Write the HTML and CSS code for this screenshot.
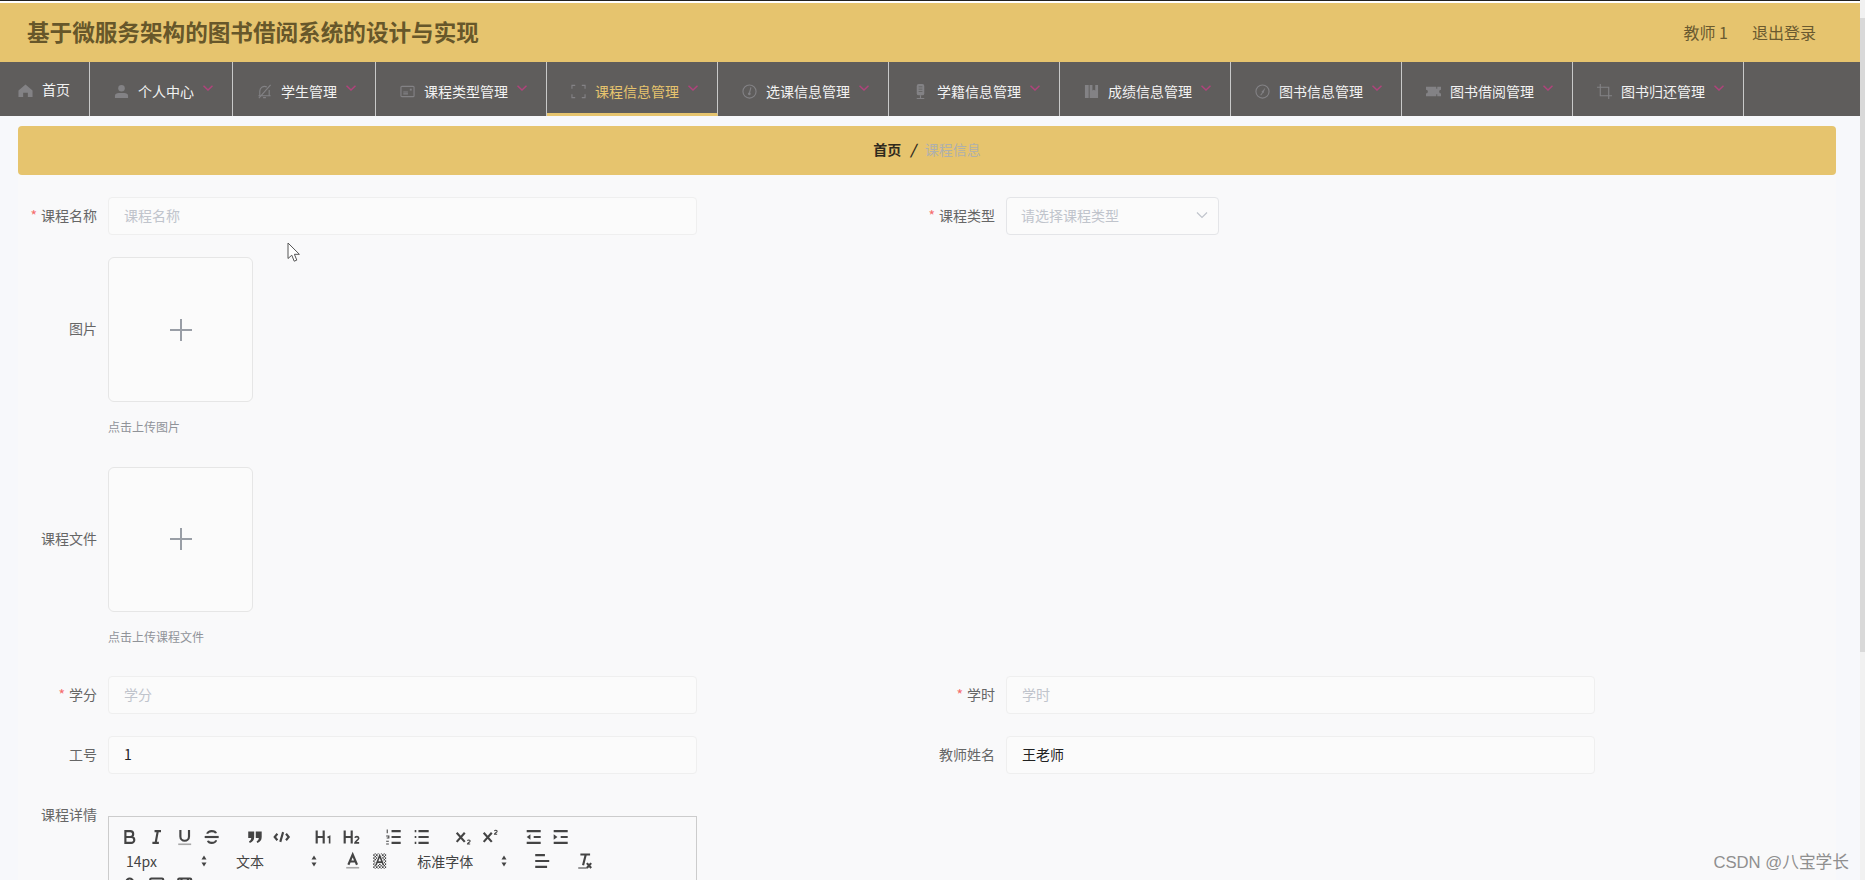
FILE: index.html
```html
<!DOCTYPE html>
<html lang="zh">
<head>
    <meta charset="UTF-8">
    <meta name="viewport" content="width=device-width, initial-scale=1.0">
    <title>基于微服务架构的图书借阅系统的设计与实现</title>
    <link rel="stylesheet" href="styles.css">
</head>
<body>
    <div class="page">
        <header class="topbar">
            <h1 class="title">基于微服务架构的图书借阅系统的设计与实现</h1>
            <div class="user">
                <span>教师 1</span>
                <a href="#logout">退出登录</a>
            </div>
        </header>

        <nav class="menu">
            <a class="menu-item menu-home" href="#home">
                <svg class="menu-icon" viewBox="0 0 16 16"><path class="fill" d="M8 1.500 15.500 8v7H10.500v-4.500h-5V15H.5V8z"/></svg>
                <span>首页</span>
            </a>
            <a class="menu-item" href="#user">
                <svg class="menu-icon" viewBox="0 0 16 16"><circle class="fill" cx="8" cy="4.500" r="3.500"/><path class="fill" d="M1 15v-2.500C1 10.500 3 9.500 5 9.500h6c2 0 4 1 4 3V15z"/></svg>
                <span>个人中心</span>
                <svg class="chev" viewBox="0 0 10 6"><path d="M.5.8 5 5 9.500.8"/></svg>
            </a>
            <a class="menu-item" href="#students">
                <svg class="menu-icon" viewBox="0 0 16 16"><path class="line" d="M3 12.500V7.500a5 5 0 0 1 7.500-4.300M13 6.500v6H5M1.500 12.500H14.500M14.500 1 2 15M6.500 14.500h3"/></svg>
                <span>学生管理</span>
                <svg class="chev" viewBox="0 0 10 6"><path d="M.5.8 5 5 9.500.8"/></svg>
            </a>
            <a class="menu-item" href="#types">
                <svg class="menu-icon" viewBox="0 0 16 16"><rect class="line" x="1" y="2.500" width="14" height="11" rx="1"/><path class="line" d="M3.500 8.500h5M3.500 10.500h5"/><rect class="fill" x="10.500" y="5" width="2" height="2"/></svg>
                <span>课程类型管理</span>
                <svg class="chev" viewBox="0 0 10 6"><path d="M.5.8 5 5 9.500.8"/></svg>
            </a>
            <a class="menu-item active" href="#courses">
                <svg class="menu-icon" viewBox="0 0 16 16"><path class="line" d="M1 5V1.500h3.500M11.500 1.500H15V5M15 11v3.500h-3.500M4.500 14.500H1V11"/></svg>
                <span>课程信息管理</span>
                <svg class="chev" viewBox="0 0 10 6"><path d="M.5.8 5 5 9.500.8"/></svg>
            </a>
            <a class="menu-item" href="#selection">
                <svg class="menu-icon" viewBox="0 0 16 16"><circle class="line" cx="8" cy="8" r="7"/><path class="line" d="M9.500 3.500 8 9.500"/><circle class="fill" cx="7.800" cy="10.500" r="1.500"/></svg>
                <span>选课信息管理</span>
                <svg class="chev" viewBox="0 0 10 6"><path d="M.5.8 5 5 9.500.8"/></svg>
            </a>
            <a class="menu-item" href="#records">
                <svg class="menu-icon" viewBox="0 0 16 16"><rect class="fill" x="4" y="0" width="8" height="12" rx="2"/><path class="line" d="M8 12v3.500M4 15.500h8"/><path class="gap" d="M6 3h4M6 5.500h4M6 8h4"/></svg>
                <span>学籍信息管理</span>
                <svg class="chev" viewBox="0 0 10 6"><path d="M.5.8 5 5 9.500.8"/></svg>
            </a>
            <a class="menu-item" href="#grades">
                <svg class="menu-icon" viewBox="0 0 16 16"><path class="fill" d="M1 1h4v14H1zM6 1h3v6l1.500-1L12 7V1h3v14H6z"/></svg>
                <span>成绩信息管理</span>
                <svg class="chev" viewBox="0 0 10 6"><path d="M.5.8 5 5 9.500.8"/></svg>
            </a>
            <a class="menu-item" href="#books">
                <svg class="menu-icon" viewBox="0 0 16 16"><circle class="line" cx="8" cy="8" r="7"/><path class="fill" d="M11 4 9 9.500 6.800 8.500z"/><path class="line" d="M9 8 6 12"/></svg>
                <span>图书信息管理</span>
                <svg class="chev" viewBox="0 0 10 6"><path d="M.5.8 5 5 9.500.8"/></svg>
            </a>
            <a class="menu-item" href="#borrow">
                <svg class="menu-icon" viewBox="0 0 16 16"><path class="fill" d="M0 3h11v2h1V3h4v3a2 2 0 0 0 0 4v3h-4v-2h-1v2H0v-3a2 2 0 0 0 0-4z"/></svg>
                <span>图书借阅管理</span>
                <svg class="chev" viewBox="0 0 10 6"><path d="M.5.8 5 5 9.500.8"/></svg>
            </a>
            <a class="menu-item" href="#return">
                <svg class="menu-icon" viewBox="0 0 16 16"><path class="line" d="M3.500 0v12.500H16M0 3.500h12.500V16"/></svg>
                <span>图书归还管理</span>
                <svg class="chev" viewBox="0 0 10 6"><path d="M.5.8 5 5 9.500.8"/></svg>
            </a>
        </nav>

        <main class="content">
            <div class="crumbs">
                <b>首页</b>
                <i>/</i>
                <span>课程信息</span>
            </div>

            <form class="course-form">
                <div class="row">
                    <label class="field-label"><em>*</em>课程名称</label>
                    <input class="input" type="text" placeholder="课程名称">
                </div>
                <div class="row">
                    <label class="field-label"><em>*</em>课程类型</label>
                    <div class="input select">
                        <span>请选择课程类型</span>
                        <svg class="select-arrow" viewBox="0 0 12 8"><path d="M1 1.500 6 6.500 11 1.500"/></svg>
                    </div>
                </div>

                <div class="row wide">
                    <label class="field-label upload-label">图片</label>
                    <div>
                        <div class="upload">
                            <svg class="plus" viewBox="0 0 22 22"><path d="M11 0v22M0 11h22"/></svg>
                        </div>
                        <p class="hint">点击上传图片</p>
                    </div>
                </div>
                <div class="row wide">
                    <label class="field-label upload-label">课程文件</label>
                    <div>
                        <div class="upload">
                            <svg class="plus" viewBox="0 0 22 22"><path d="M11 0v22M0 11h22"/></svg>
                        </div>
                        <p class="hint">点击上传课程文件</p>
                    </div>
                </div>

                <div class="row">
                    <label class="field-label"><em>*</em>学分</label>
                    <input class="input" type="text" placeholder="学分">
                </div>
                <div class="row">
                    <label class="field-label"><em>*</em>学时</label>
                    <input class="input" type="text" placeholder="学时">
                </div>
                <div class="row">
                    <label class="field-label">工号</label>
                    <input class="input" type="text" value="1">
                </div>
                <div class="row">
                    <label class="field-label">教师姓名</label>
                    <input class="input" type="text" value="王老师">
                </div>

                <div class="row wide">
                    <label class="field-label">课程详情</label>
                    <div class="editor">
                        <div class="tool-group">
                            <svg class="tool" viewBox="0 0 18 18"><path class="st" d="M5 3.500h4.500a2.700 2.700 0 0 1 0 5.500H5zM5 9h5.500a2.700 2.700 0 0 1 0 5.500H5z"/></svg>
                            <svg class="tool" viewBox="0 0 18 18"><path class="st" d="M7 3.500h6M5 14.500h6M8 14.500l2-11"/></svg>
                            <svg class="tool" viewBox="0 0 18 18"><path class="st" d="M5 2.500v6a4 4 0 0 0 8 0v-6"/><rect class="shade" x="3" y="15" width="12" height="1.500"/></svg>
                            <svg class="tool" viewBox="0 0 18 18"><path class="st" d="M13 5.500C12.500 4 11 3.500 9 3.500S5 4.500 5 6M5.500 12.500c.5 1.500 1.500 2 3.500 2s4-1 4-2.500"/><path class="st" d="M2.500 9h13"/></svg>
                        </div>
                        <div class="tool-group">
                            <svg class="tool" viewBox="0 0 18 18"><path class="fl" d="M3 4h5.500v5c0 3-1.500 4.500-4 5.500l-.8-1.300C5 12.500 5.800 11.500 5.800 10H3zM10 4h5.500v5c0 3-1.500 4.500-4 5.500l-.8-1.300c1.300-.7 2.100-1.700 2.100-3.200H10z"/></svg>
                            <svg class="tool" viewBox="0 0 18 18"><path class="st" d="M5 6 2.500 9 5 12M13 6l2.500 3L13 12M10.300 4.500 7.700 13.500"/></svg>
                        </div>
                        <div class="tool-group">
                            <svg class="tool" viewBox="0 0 18 18"><path class="st" d="M2.500 3v12M9 3v12M2.500 9H9"/><path class="mid" d="M12.500 9.500l2-1V15"/></svg>
                            <svg class="tool" viewBox="0 0 18 18"><path class="st" d="M2.500 3v12M9 3v12M2.500 9H9"/><path class="mid" d="M12 9.800c.5-1.600 3.500-1.600 3.500.3 0 1.500-3.500 2.900-3.500 4.400h3.900"/></svg>
                        </div>
                        <div class="tool-group">
                            <svg class="tool" viewBox="0 0 18 18"><path class="st" d="M7 3.500h8.500M7 9h8.500M7 14.500h8.500"/><path class="th" d="M3 2v3.500M2 8h2.500v2H2.500M2 13h2.500M2 15.500h2.500"/></svg>
                            <svg class="tool" viewBox="0 0 18 18"><path class="st" d="M6 3.500h9.500M6 9h9.500M6 14.500h9.500M2.500 3.500h1.500M2.500 9h1.500M2.500 14.500h1.500"/></svg>
                        </div>
                        <div class="tool-group">
                            <svg class="tool" viewBox="0 0 18 18"><path class="st" d="M2.500 5l7.500 8.500M10 5l-7.500 8.500"/><path class="th" d="M12.500 12.500c.3-1 2.500-1 2.500.2 0 1-2.500 1.800-2.500 2.800H15"/></svg>
                            <svg class="tool" viewBox="0 0 18 18"><path class="st" d="M2.500 5l7.500 8.500M10 5l-7.500 8.500"/><path class="th" d="M12.500 3.500c.3-1 2.500-1 2.500.2 0 1-2.500 1.800-2.500 2.800H15"/></svg>
                        </div>
                        <div class="tool-group">
                            <svg class="tool" viewBox="0 0 18 18"><path class="st" d="M2.500 3.500h13M2.500 14.500h13M9 9h6.500"/><path class="fl" d="M6 6.500v5L2.500 9z"/></svg>
                            <svg class="tool" viewBox="0 0 18 18"><path class="st" d="M2.500 3.500h13M2.500 14.500h13M9 9h6.500"/><path class="fl" d="M2.500 6.500v5L6 9z"/></svg>
                        </div>

                        <div class="tool-group picker size">
                            <span>14px</span>
                            <svg class="tool-arrows" viewBox="0 0 18 18"><path class="fl" d="M6.500 7.500 9 3.500l2.500 4zM6.500 10.500 9 14.500l2.500-4z"/></svg>
                        </div>
                        <div class="tool-group picker heading">
                            <span>文本</span>
                            <svg class="tool-arrows" viewBox="0 0 18 18"><path class="fl" d="M6.500 7.500 9 3.500l2.500 4zM6.500 10.500 9 14.500l2.500-4z"/></svg>
                        </div>
                        <div class="tool-group colors">
                            <svg class="tool" viewBox="0 0 18 18"><path class="st" d="M5 12.500 9 3l4 9.500M6.300 9.500h5.400"/><rect class="shade" x="3" y="14.500" width="12" height="1.500"/></svg>
                            <svg class="tool" viewBox="0 0 18 18">
                                <defs><pattern id="hatch" width="2.800" height="2.800" patternUnits="userSpaceOnUse"><rect class="fl" width="1.400" height="1.400"/><rect class="fl" x="1.400" y="1.400" width="1.400" height="1.400"/></pattern></defs>
                                <rect fill="url(#hatch)" x="3" y="2" width="12" height="14"/>
                                <path class="halo" d="M5.500 13 9 4l3.500 9M6.700 10h4.600"/>
                                <path class="mid" d="M5.500 13 9 4l3.500 9M6.700 10h4.600"/>
                            </svg>
                        </div>
                        <div class="tool-group picker font">
                            <span>标准字体</span>
                            <svg class="tool-arrows" viewBox="0 0 18 18"><path class="fl" d="M6.500 7.500 9 3.500l2.500 4zM6.500 10.500 9 14.500l2.500-4z"/></svg>
                        </div>
                        <div class="tool-group align">
                            <svg class="tool" viewBox="0 0 18 18"><path class="st" d="M3 3.500h9M3 9h13M3 14.500h11"/></svg>
                        </div>
                        <div class="tool-group">
                            <svg class="tool" viewBox="0 0 18 18"><path class="st" d="M5 3h9M10 3 7.500 13"/><path class="th" d="M3 15.500h8"/><path class="st" d="M11 11l4 4.500M15 11l-4 4.500"/></svg>
                        </div>

                        <div class="tool-group">
                            <svg class="tool" viewBox="0 0 18 18"><path class="st" d="M6 9V6a3 3 0 0 1 6 0v3M6 12v1a3 3 0 0 0 6 0v-1"/></svg>
                            <svg class="tool" viewBox="0 0 18 18"><rect class="st" x="3" y="3" width="12" height="12" rx="1"/></svg>
                            <svg class="tool" viewBox="0 0 18 18"><rect class="st" x="3" y="3" width="12" height="12" rx="1"/><path class="st" d="M6 3v12M12 3v12"/></svg>
                        </div>
                    </div>
                </div>
            </form>
        </main>

        <svg class="cursor" viewBox="0 0 13 21"><path d="M1 1v15.500l3.800-3.300 2.400 6 2.600-1.100-2.400-5.800h5z"/></svg>
        <div class="watermark">CSDN @八宝学长</div>
    </div>

    <div class="scrollbar"><div class="thumb"></div></div>
</body>
</html>
```

FILE: styles.css
```css
* {
    box-sizing: border-box;
}
body {
    font-family: "Noto Sans CJK SC", "Liberation Sans", sans-serif;
    background-color: #f7f8fb;
    margin: 0;
    padding: 0;
    height: 880px;
    overflow: hidden;
    display: flex;
}
a {
    color: inherit;
    text-decoration: none;
}

.page {
    flex: 1;
    min-width: 0;
    height: 880px;
    overflow: hidden;
    position: relative;
}

/* header */
.topbar {
    height: 62px;
    background-color: #e6c46e;
    border-top: 1px solid #222;
    box-shadow: inset 0 2px 0 #fff;
    padding: 0 44px 0 27px;
    display: flex;
    align-items: center;
    justify-content: space-between;
    color: #6a5a30;
}
.title {
    margin: 0;
    font-size: 22.6px;
    font-weight: 700;
    color: #67572a;
}
.user {
    display: flex;
    gap: 24px;
    font-size: 16px;
}

/* menu */
.menu {
    height: 54px;
    background-color: #5f5d5c;
    display: flex;
}
.menu-item {
    display: flex;
    align-items: center;
    padding: 4px 19px 0 24px;
    border-right: 1px solid #c9c9c9;
    color: #f2f2f2;
    font-size: 14px;
}
.menu-home {
    padding: 0 19px 0 18px;
}
.menu-item.active {
    color: #e6c46e;
    border-bottom: 3px solid #e6c46e;
    padding-top: 7px;
}
.menu-icon {
    width: 15px;
    height: 15px;
    margin-right: 9px;
    flex-shrink: 0;
}
.menu-home .menu-icon {
    margin-top: 3px;
}
.menu-icon .fill {
    fill: #838285;
}
.menu-icon .line {
    fill: none;
    stroke: #838285;
    stroke-width: 1.200;
}
.menu-icon .gap {
    fill: none;
    stroke: #5f5d5c;
    stroke-width: 0.800;
}
.chev {
    width: 10px;
    height: 6px;
    margin: 0 0 7px 9px;
    flex-shrink: 0;
    fill: none;
    stroke: #b0437c;
    stroke-width: 1.500;
}

/* main */
.content {
    padding: 10px 24px 0 18px;
}
.crumbs {
    height: 49px;
    padding-bottom: 3px;
    background-color: #e6c46e;
    border-radius: 4px;
    display: flex;
    align-items: center;
    justify-content: center;
    gap: 9px;
    font-size: 14px;
    color: #aeb0ad;
}
.crumbs b {
    color: #2f2a1d;
}
.crumbs i {
    color: #2f2a1d;
    font-weight: 700;
}

/* form sits on a slightly lighter panel */
.course-form {
    background-color: #f9f9fa;
    padding-top: 22px;
    display: grid;
    grid-template-columns: 898px 1fr;
    row-gap: 22px;
    align-items: start;
}
.row {
    display: flex;
    align-items: flex-start;
}
.row.wide {
    grid-column: 1 / -1;
}
.field-label {
    width: 79px;
    margin-right: 11px;
    flex-shrink: 0;
    text-align: right;
    font-size: 14px;
    line-height: 36px;
    color: #666;
}
.field-label em {
    color: #f56c6c;
    font-style: normal;
    margin-right: 4px;
}
.upload-label {
    line-height: 143px;
}

.input {
    width: 589px;
    height: 38px;
    padding: 0 15px 2px;
    border: 1px solid #efefef;
    border-radius: 4px;
    background-color: #fbfbfb;
    font-family: inherit;
    font-size: 14px;
    color: #222;
    outline: none;
}
.input::placeholder {
    color: #c0c4cc;
}
.select {
    width: 213px;
    padding-left: 14px;
    display: flex;
    align-items: center;
    justify-content: space-between;
    border-color: #e4e5e8;
    color: #c0c4cc;
}
.select-arrow {
    width: 12px;
    height: 8px;
    margin-right: -5px;
    fill: none;
    stroke: #c0c4cc;
    stroke-width: 1.200;
}

.upload {
    width: 145px;
    height: 145px;
    border: 1px solid #e6e6e6;
    border-radius: 6px;
    background-color: #fbfbfb;
    display: flex;
    align-items: center;
    justify-content: center;
}
.plus {
    width: 22px;
    height: 22px;
    fill: none;
    stroke: #999ea6;
    stroke-width: 2;
}
.hint {
    margin: 0;
    height: 42.5px;
    padding-top: 11px;
    font-size: 12px;
    line-height: 28px;
    color: #909399;
}

/* rich text toolbar */
.editor {
    width: 589px;
    height: 100px;
    margin-top: 20px;
    padding: 8px 7px;
    border: 1px solid #ccc;
    display: flex;
    flex-wrap: wrap;
    align-content: flex-start;
}
.tool-group {
    display: flex;
    align-items: center;
    height: 24px;
    margin-right: 15px;
    font-size: 14px;
    color: #444;
}
.tool {
    width: 27.4px;
    height: 24px;
    padding: 2px 4px;
    flex-shrink: 0;
}
.st {
    fill: none;
    stroke: #444;
    stroke-width: 2;
}
.mid {
    fill: none;
    stroke: #444;
    stroke-width: 1.500;
}
.th {
    fill: none;
    stroke: #444;
    stroke-width: 1;
}
.halo {
    fill: none;
    stroke: #fbfbfb;
    stroke-width: 3;
}
.fl {
    fill: #444;
}
.shade {
    fill: #a8a8a8;
}
.picker {
    justify-content: space-between;
    padding-left: 10px;
}
.tool-arrows {
    width: 18px;
    height: 18px;
    margin-right: 2px;
}
.picker.size {
    width: 97px;
    margin-right: 15px;
}
.picker.size .tool-arrows {
    margin-right: 0;
}
.picker.heading {
    width: 97px;
    margin-right: 13.5px;
    padding-left: 8px;
}
.picker.font {
    width: 108px;
    margin-right: 12px;
    padding-left: 9px;
}
.picker.font .tool-arrows {
    margin-right: 3px;
}

/* things that lie over the page */
.cursor {
    position: absolute;
    left: 287px;
    top: 242px;
    width: 13px;
    height: 21px;
    fill: #fff;
    stroke: #555;
    stroke-width: 1;
}
.watermark {
    position: absolute;
    right: 11px;
    bottom: 7px;
    font-size: 16.7px;
    color: #8f8f8f;
    font-family: "Liberation Sans", "Noto Sans CJK SC", sans-serif;
}

.scrollbar {
    width: 5px;
    flex-shrink: 0;
    height: 880px;
    background-color: #f1f1f1;
    padding-top: 18px;
}
.thumb {
    height: 634px;
    background-color: #d9d9d9;
}
```
